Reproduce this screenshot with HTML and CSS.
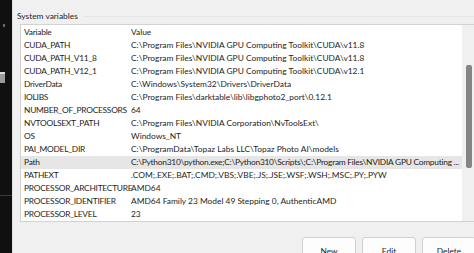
FILE: index.html
```html
<!DOCTYPE html>
<html lang="en">

<head>
    <meta charset="UTF-8" />
    <meta name="viewport" content="width=device-width, initial-scale=1.0" />
    <title>Environment Variables</title>
    <link rel="stylesheet" href="styles.css">
</head>

<body>
    <div class="taskbar">
        <div class="tick"></div>
        <div class="tray-icon"></div>
        <div class="tray-line"></div>
    </div>

    <div class="dialog">
        <div class="top-rule"></div>

        <div class="group-head">
            <span class="group-label">System variables</span>
            <span class="group-line"></span>
        </div>

        <div class="listbox">
            <div class="list">
                <div class="row head">
                    <div class="col-name">Variable</div>
                    <div class="col-value">Value</div>
                </div>
                <div class="row">
                    <div class="col-name">CUDA_PATH</div>
                    <div class="col-value">C:\Program Files\NVIDIA GPU Computing Toolkit\CUDA\v11.8</div>
                </div>
                <div class="row">
                    <div class="col-name">CUDA_PATH_V11_8</div>
                    <div class="col-value">C:\Program Files\NVIDIA GPU Computing Toolkit\CUDA\v11.8</div>
                </div>
                <div class="row">
                    <div class="col-name">CUDA_PATH_V12_1</div>
                    <div class="col-value">C:\Program Files\NVIDIA GPU Computing Toolkit\CUDA\v12.1</div>
                </div>
                <div class="row">
                    <div class="col-name">DriverData</div>
                    <div class="col-value">C:\Windows\System32\Drivers\DriverData</div>
                </div>
                <div class="row">
                    <div class="col-name">IOLIBS</div>
                    <div class="col-value">C:\Program Files\darktable\lib\libgphoto2_port\0.12.1</div>
                </div>
                <div class="row">
                    <div class="col-name">NUMBER_OF_PROCESSORS</div>
                    <div class="col-value">64</div>
                </div>
                <div class="row">
                    <div class="col-name">NVTOOLSEXT_PATH</div>
                    <div class="col-value">C:\Program Files\NVIDIA Corporation\NvToolsExt\</div>
                </div>
                <div class="row">
                    <div class="col-name">OS</div>
                    <div class="col-value">Windows_NT</div>
                </div>
                <div class="row">
                    <div class="col-name">PAI_MODEL_DIR</div>
                    <div class="col-value">C:\ProgramData\Topaz Labs LLC\Topaz Photo AI\models</div>
                </div>
                <div class="row selected">
                    <div class="col-name">Path</div>
                    <div class="col-value long">C:\Python310\python.exe;C:\Python310\Scripts\;C:\Program Files\NVIDIA GPU Computing ...</div>
                </div>
                <div class="row">
                    <div class="col-name">PATHEXT</div>
                    <div class="col-value">.COM;.EXE;.BAT;.CMD;.VBS;.VBE;.JS;.JSE;.WSF;.WSH;.MSC;.PY;.PYW</div>
                </div>
                <div class="row">
                    <div class="col-name">PROCESSOR_ARCHITECTURE</div>
                    <div class="col-value">AMD64</div>
                </div>
                <div class="row">
                    <div class="col-name">PROCESSOR_IDENTIFIER</div>
                    <div class="col-value">AMD64 Family 23 Model 49 Stepping 0, AuthenticAMD</div>
                </div>
                <div class="row">
                    <div class="col-name">PROCESSOR_LEVEL</div>
                    <div class="col-value">23</div>
                </div>
            </div>
            <div class="scrollbar">
                <div class="thumb"></div>
            </div>
        </div>

        <div class="actions">
            <button class="btn">New</button>
            <button class="btn">Edit</button>
            <button class="btn">Delete</button>
        </div>
    </div>
</body>

</html>
```

FILE: styles.css
```css
/* Environment variables dialog */

body {
    margin: 0;
    width: 474px;
    height: 253px;
    overflow: hidden;
    display: flex;
    font-family: Lato, "Open Sans", Arial, sans-serif;
    font-size: 8.4px;
    color: #1e1e1e;
    background-color: #f0f0f0;
}

.taskbar {
    width: 12px;
    flex-shrink: 0;
    background-color: #101010;
    display: flex;
    flex-direction: column;
}

.tick {
    width: 2px;
    height: 3px;
    margin: 24px 0 0 3px;
    background-color: #6a6a6a;
}

.tray-icon {
    width: 5px;
    height: 9px;
    margin: 45px 0 0 0;
    background-color: #9a9a9a;
    border-top: 2px solid #d8d8d8;
}

.tray-line {
    height: 1px;
    margin-top: 112px;
    background-color: #3a3a3a;
}

.dialog {
    flex: 1;
    min-width: 0;
    display: flex;
    flex-direction: column;
    border-left: 1px solid #e2e2e2;
}

.top-rule {
    height: 1px;
    margin-top: 7px;
    background-color: #e4e4e4;
}

.group-head {
    display: flex;
    align-items: center;
    height: 16px;
    margin-top: 4px;
    padding-left: 4px;
}

.group-label {
    white-space: nowrap;
    padding-right: 6px;
}

.group-line {
    flex: 1;
    height: 1px;
    background-color: #e6e6e6;
}

.listbox {
    display: flex;
    width: 470px;
    margin: 3px 0 0 7px;
    background-color: #ffffff;
    border: 1px solid #d2d2d2;
}

.list {
    width: 441px;
    flex-shrink: 0;
    display: flex;
    flex-direction: column;
}

.row {
    display: flex;
    height: 13px;
    line-height: 13px;
    white-space: nowrap;
}

.row.head {
    height: 14px;
    line-height: 15px;
}

.row.selected {
    background-color: #e6e6e6;
}

.col-name {
    width: 107px;
    padding-left: 3px;
    flex-shrink: 0;
    letter-spacing: -0.25px;
}

.col-value {
    flex: 1;
    min-width: 0;
    overflow: hidden;
}

.col-value.long {
    letter-spacing: -0.25px;
}

.scrollbar {
    width: 12px;
    flex-shrink: 0;
    background-color: #f0f0f0;
    padding: 40px 2px 0 4px;
}

.thumb {
    width: 6px;
    height: 103px;
    border-radius: 2px;
    background-color: #858585;
}

.actions {
    display: flex;
    justify-content: flex-end;
    gap: 6px;
    margin-top: 15px;
    margin-right: -2px;
}

.btn {
    width: 54px;
    height: 24px;
    padding: 4px 0 0 0;
    font-family: inherit;
    font-size: 8.4px;
    color: #1e1e1e;
    background-color: #fdfdfd;
    border: 1px solid #d0d0d0;
    border-radius: 3px;
    align-self: flex-start;
    line-height: 12px;
}
```
